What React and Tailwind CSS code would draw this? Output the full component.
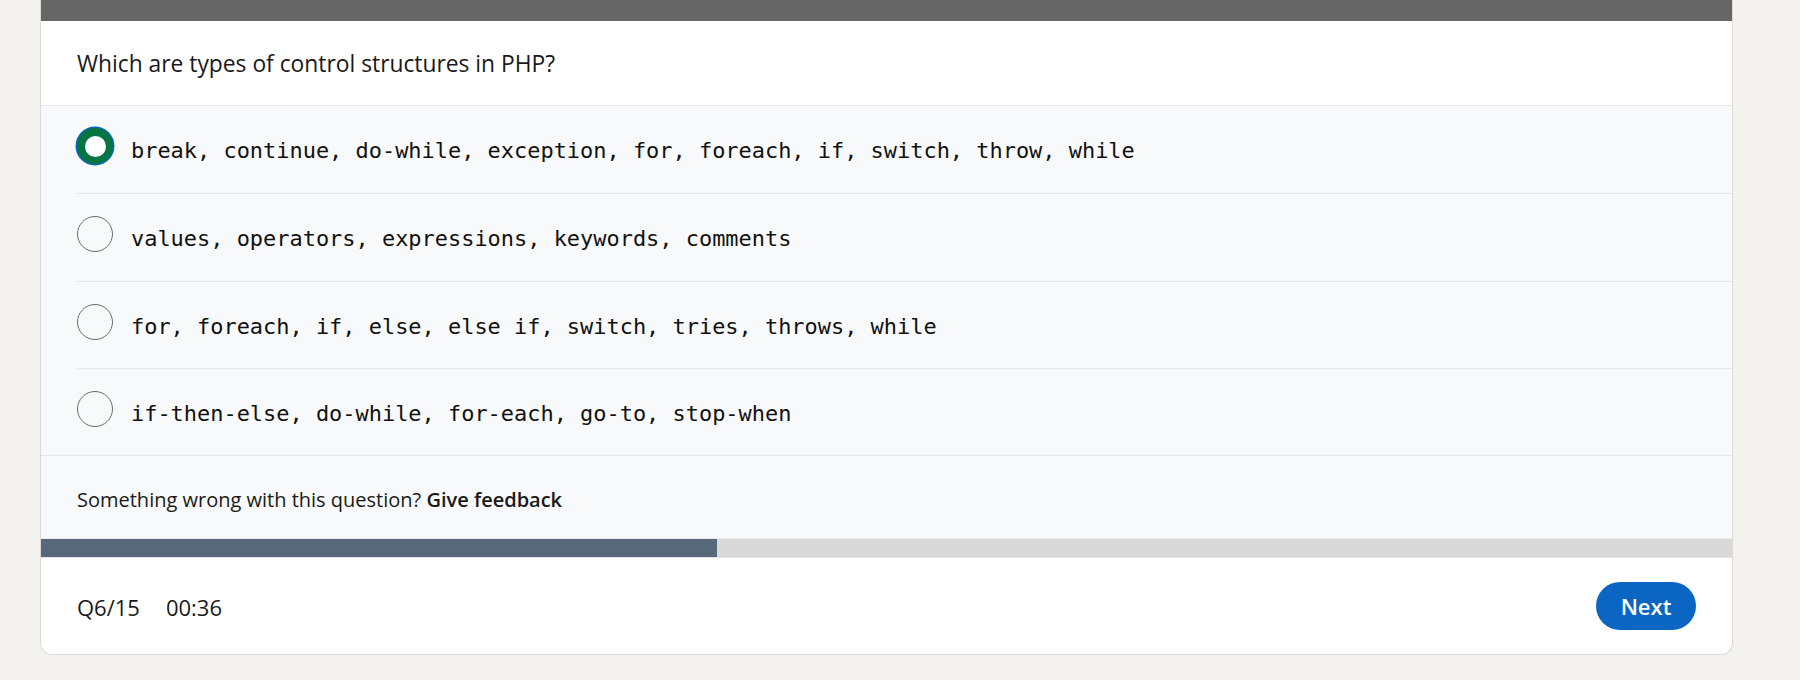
import React from "react";

const options = [
  "break, continue, do-while, exception, for, foreach, if, switch, throw, while",
  "values, operators, expressions, keywords, comments",
  "for, foreach, if, else, else if, switch, tries, throws, while",
  "if-then-else, do-while, for-each, go-to, stop-when",
];

// row heights follow the 1.5x scaled layout of the original
const rowClasses = [
  "h-[88px] pb-[7px] border-b border-[#e6e6e6]",
  "h-[88px] pb-[7px] border-b border-[#e6e6e6]",
  "h-[87px] pb-[6px] border-b border-[#e6e6e6]",
  "h-[86px] pb-[6px]",
];

function Radio({ checked }) {
  if (checked) {
    return (
      <span className="flex h-[36px] w-[36px] shrink-0 items-center justify-center rounded-full bg-[#057642] ring-[1.5px] ring-[#0a66c2]">
        <span className="h-[21px] w-[21px] rounded-full bg-white" />
      </span>
    );
  }
  return <span className="h-[36px] w-[36px] shrink-0 rounded-full border-[1.5px] border-[#6b6b6b]" />;
}

export default function App() {
  const current = 6;
  const total = 15;
  const progress = (current / total) * 100;

  return (
    <div className="min-h-screen bg-[#f3f2ef] pl-[40px] font-['Open_Sans',sans-serif] text-[#191919]">
      <div className="w-[1693px] overflow-hidden rounded-b-[12px] border-x border-b border-[#dcdad6] bg-white">
        {/* top bar */}
        <div className="h-[21px] bg-[#666666]" />

        {/* question */}
        <div className="flex h-[85px] items-center border-b border-[#e8e8e8] px-[36px] pt-[3px]">
          <p className="text-[22.8px]">Which are types of control structures in PHP?</p>
        </div>

        {/* options */}
        <div className="border-b border-[#e6e6e6] bg-[#f8f9fa]">
          {options.map((opt, i) => (
            <div key={i} className="pl-[36px]">
              <div className={`flex items-center gap-[18px] ${rowClasses[i]}`}>
                <Radio checked={i === 0} />
                <span className="pt-[11px] font-['DejaVu_Sans_Mono',monospace] text-[21.95px] text-[#111111]">
                  {opt}
                </span>
              </div>
            </div>
          ))}
        </div>

        {/* feedback */}
        <div className="flex h-[83px] items-center border-b border-[#ececec] bg-[#f8f9fa] px-[36px] pt-[5px]">
          <p className="text-[20px]">
            Something wrong with this question? <span className="font-semibold">Give feedback</span>
          </p>
        </div>

        {/* progress */}
        <div className="flex h-[18px] bg-[#d9d9d9]">
          <div className="h-full bg-[#56687a]" style={{ width: `${progress}%` }} />
        </div>

        {/* footer */}
        <div className="flex h-[97px] items-center justify-between border-t border-[#e3e3e3] px-[36px]">
          <div className="flex items-center gap-[26px] pt-[3px] text-[22px]">
            <span>Q6/15</span>
            <span>00:36</span>
          </div>
          <button className="flex h-[48px] w-[100px] items-center justify-center rounded-full bg-[#0a66c2] text-[22px] font-semibold text-white">
            Next
          </button>
        </div>
      </div>
    </div>
  );
}
